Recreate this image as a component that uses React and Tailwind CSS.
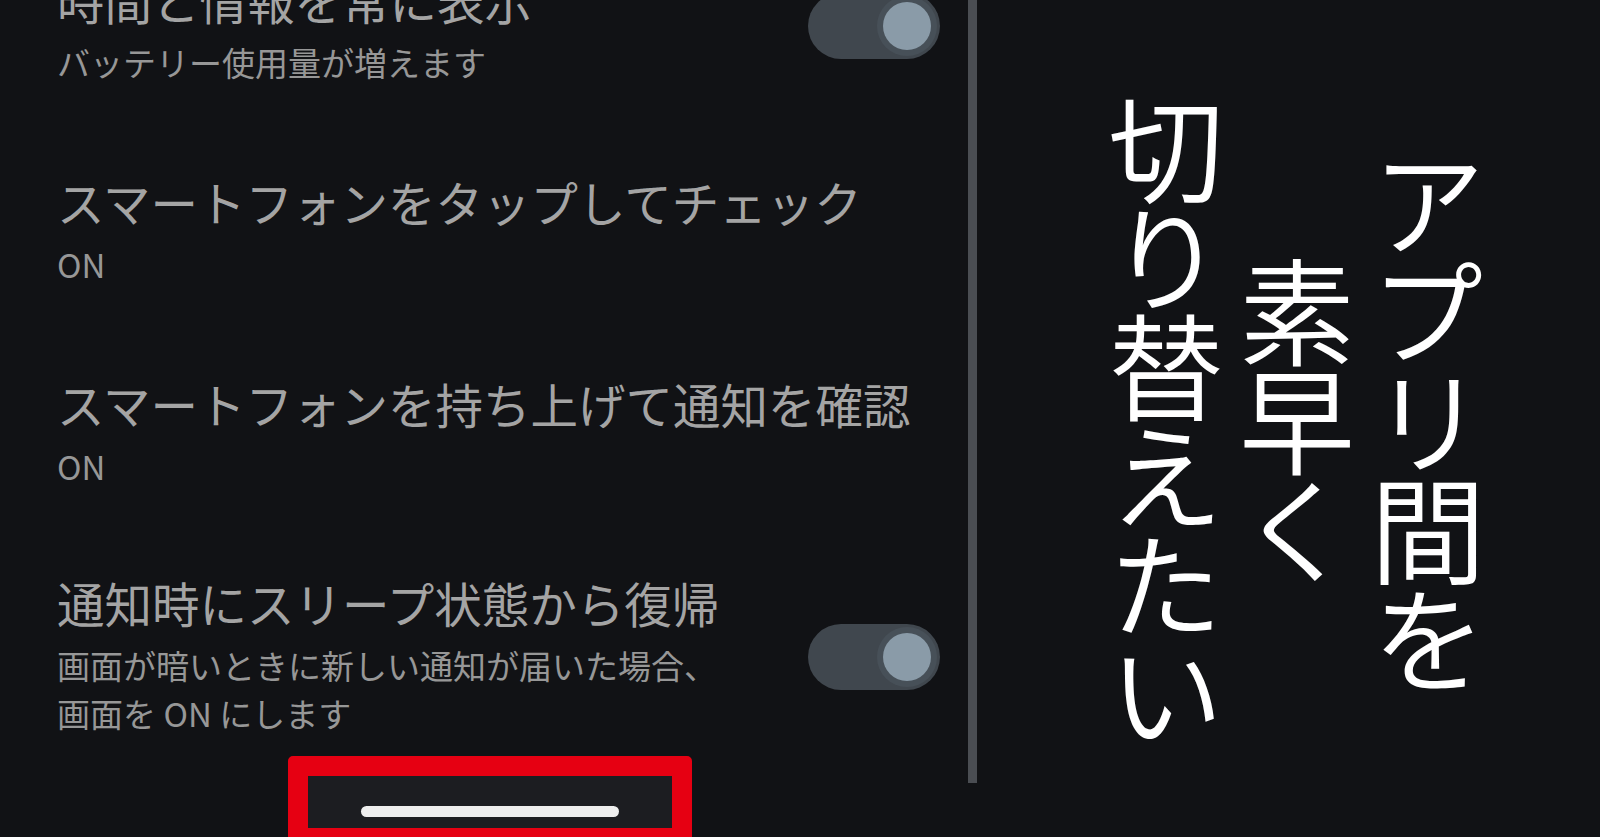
import React from "react";

function Toggle({ className = "" }) {
  return (
    <div className={"flex h-[66px] w-[132px] shrink-0 items-center justify-end rounded-full bg-[#40474e] pr-[9px] " + className}>
      <div className="h-[48px] w-[48px] rounded-full bg-[#8a9ba8] shadow-[0_0_0_6px_#475058]" />
    </div>
  );
}

function Item({ title, subs, toggle, className = "", toggleClass = "" }) {
  return (
    <div className={"flex items-center justify-between pr-[28px] " + className}>
      <div className="flex flex-col">
        <div className="whitespace-nowrap text-[47.5px] leading-[76px] text-[#a4a4a4]">{title}</div>
        {subs.map((s, i) => (
          <div key={i} className="whitespace-nowrap text-[33px] leading-[48px] text-[#979797]">
            {s}
          </div>
        ))}
      </div>
      {toggle && <Toggle className={toggleClass} />}
    </div>
  );
}

export default function App() {
  return (
    <div className="flex h-[837px] w-[1600px] overflow-hidden bg-[#111215] font-['Noto_Sans_CJK_JP','Noto_Sans',sans-serif]">
      <div className="flex w-[968px] shrink-0 flex-col pl-[57px]">
        <div className="-mt-[38px] flex flex-col">
          <Item title="時間と情報を常に表示" subs={["バッテリー使用量が増えます"]} toggle toggleClass="mt-[4px]" />
          <Item className="mt-[78px]" title="スマートフォンをタップしてチェック" subs={["ON"]} />
          <Item className="mt-[78px]" title="スマートフォンを持ち上げて通知を確認" subs={["ON"]} />
          <Item
            className="mt-[75px]"
            toggleClass="mt-[12px]"
            title="通知時にスリープ状態から復帰"
            subs={["画面が暗いときに新しい通知が届いた場合、", "画面を ON にします"]}
            toggle
          />
        </div>
        <div className="ml-[231px] mt-[19px] w-[404px] shrink-0 rounded-[5px] border-[20px] border-[#e60012] bg-[#1c1d21]">
          <div className="flex h-[52px] items-end justify-center pb-[11px]">
            <div className="h-[11px] w-[258px] rounded-full bg-[#eeeeee]" />
          </div>
        </div>
      </div>
      <div className="h-[783px] w-[9px] shrink-0 bg-[#4a4d52]" />
      <div className="flex flex-1 justify-center pl-[16px]">
        <div className="h-full text-center text-[116px] font-[350] leading-[131px] tracking-[-7px] text-white [writing-mode:vertical-rl]">
          アプリ間を
          <br />
          素早く
          <br />
          切り替えたい
        </div>
      </div>
    </div>
  );
}
